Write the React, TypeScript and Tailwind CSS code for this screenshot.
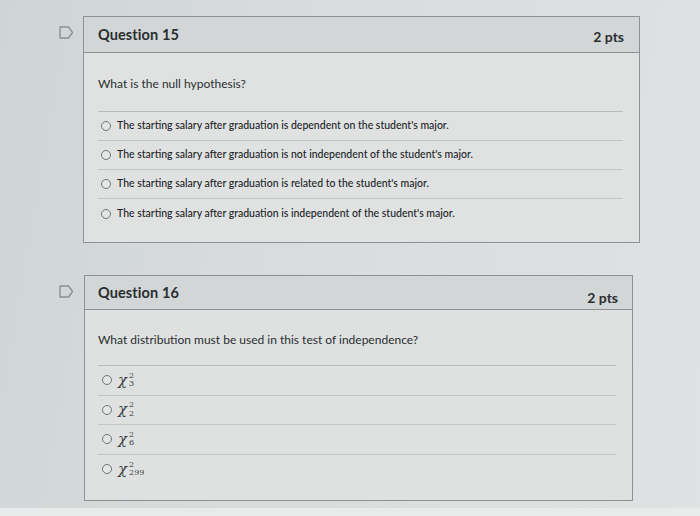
import React from "react";

function Flag() {
  return (
    <svg width="15" height="13" viewBox="0 0 15 13" className="mt-[10px] shrink-0">
      <path d="M1 1 H9.5 L13.5 6.5 L9.5 12 H1 Z" fill="none" stroke="#8a9196" strokeWidth="1.4" strokeLinejoin="round" />
    </svg>
  );
}

function Radio() {
  return <span className="inline-block h-[10px] w-[10px] shrink-0 rounded-full border border-[#6f7679] bg-[#e4e6e6]" />;
}

function Chi({ sub }: { sub: string }) {
  return (
    <span className="inline-flex items-center font-['DejaVu_Serif',serif] text-[#3a3f42]">
      <span className="pr-[2px] text-[15px] italic leading-none">χ</span>
      <span className="inline-flex flex-col text-[8px] leading-[8.5px]">
        <span>2</span>
        <span>{sub}</span>
      </span>
    </span>
  );
}

export default function App() {
  const q1 = [
    "The starting salary after graduation is dependent on the student's major.",
    "The starting salary after graduation is not independent of the student's major.",
    "The starting salary after graduation is related to the student's major.",
    "The starting salary after graduation is independent of the student's major.",
  ];
  const q2 = ["3", "2", "6", "299"];
  return (
    <div className="flex h-[516px] w-[700px] flex-col overflow-hidden bg-[linear-gradient(100deg,#cfd4d6_0%,#d8dcdd_40%,#dfe2e2_100%)] font-['Lato',sans-serif] text-[#2e3336]">
      <div className="flex flex-1 flex-col gap-[32px] pl-[59px] pt-[16px]">
        {/* Question 15 */}
        <div className="flex gap-[9px]">
          <Flag />
          <div className="w-[557px] border border-[#8d9193] bg-[#e0e2e2]">
            <div className="flex h-[36px] items-center justify-between border-b border-[#8d9193] bg-[#d3d6d7] pl-[14px] pr-[15px]">
              <span className="text-[14.5px] font-bold tracking-[0.1px] text-[#2a2e30]">Question 15</span>
              <span className="mt-[3px] text-[14px] font-bold text-[#2a2e30]">2 pts</span>
            </div>
            <div className="pb-[14px] pl-[14px] pr-[16px] pt-[22px]">
              <div className="text-[12px] leading-[18px] text-[#2a2e30]">What is the null hypothesis?</div>
              <div className="mt-[18px] border-t border-[#b9bcbd]">
                {q1.map((t, i) => (
                  <div
                    key={i}
                    className={`flex h-[29px] items-center gap-[6px] pl-[3px] ${i < q1.length - 1 ? "border-b border-[#c2c5c6]" : ""}`}
                  >
                    <Radio />
                    <span className="text-[10.5px] font-medium text-[#202427]">{t}</span>
                  </div>
                ))}
              </div>
            </div>
          </div>
        </div>
        {/* Question 16 */}
        <div className="flex gap-[10px]">
          <Flag />
          <div className="w-[549px] border border-[#8d9193] bg-[#dfe1e1]">
            <div className="flex h-[34px] items-center justify-between border-b border-[#8d9193] bg-[#d3d6d7] pl-[13px] pr-[14px]">
              <span className="text-[14.5px] font-bold tracking-[0.1px] text-[#2a2e30]">Question 16</span>
              <span className="mt-[10px] text-[14px] font-bold text-[#2a2e30]">2 pts</span>
            </div>
            <div className="pb-[16px] pl-[13px] pr-[16px] pt-[21px]">
              <div className="text-[12px] leading-[18px] text-[#2a2e30]">What distribution must be used in this test of independence?</div>
              <div className="mt-[16px] border-t border-[#b9bcbd]">
                {q2.map((s, i) => (
                  <div
                    key={i}
                    className={`flex h-[29.5px] items-center gap-[6px] pl-[4px] ${i < q2.length - 1 ? "border-b border-[#c2c5c6]" : ""}`}
                  >
                    <Radio />
                    <Chi sub={s} />
                  </div>
                ))}
              </div>
            </div>
          </div>
        </div>
      </div>
      <div className="h-[8px] bg-[#e9ebeb]" />
    </div>
  );
}
